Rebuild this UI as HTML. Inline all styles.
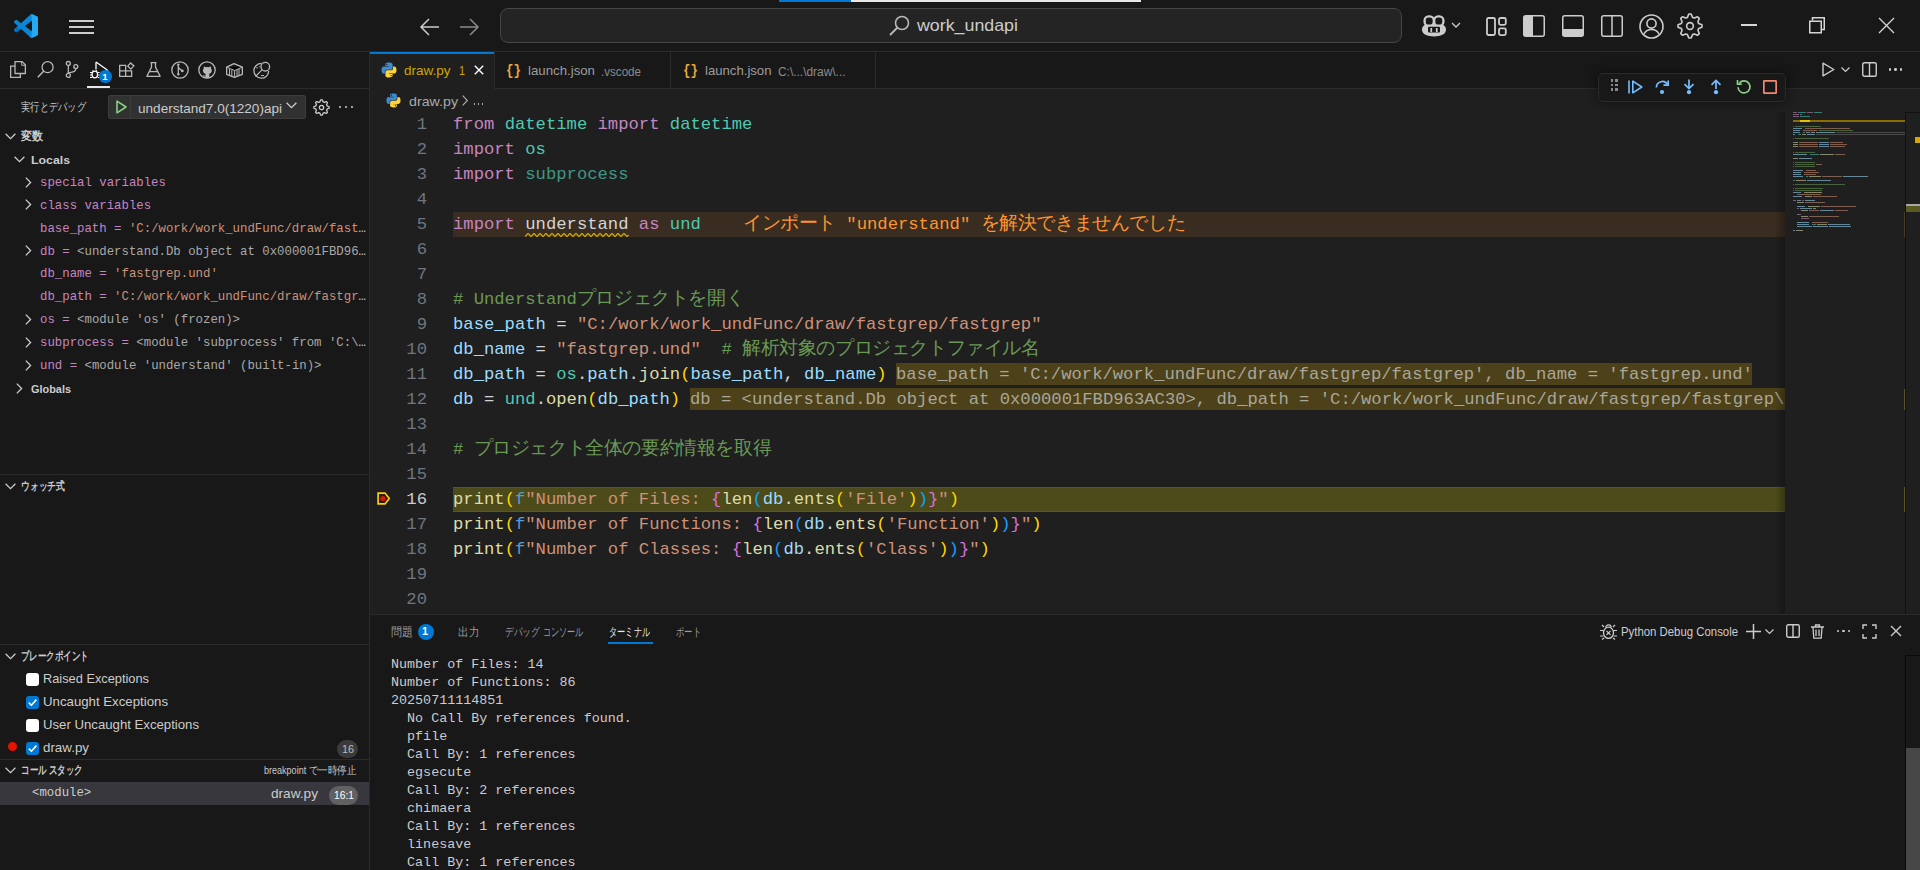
<!DOCTYPE html><html><head><meta charset="utf-8"><style>
*{box-sizing:border-box;margin:0;padding:0}
html,body{width:1920px;height:870px;overflow:hidden;background:#181818;font-family:"Liberation Sans",sans-serif;color:#cccccc}
.a{position:absolute}
.t{position:absolute;white-space:pre;font-family:"Liberation Sans",sans-serif}
svg.i{position:absolute;overflow:visible}
.ln{position:absolute;left:370px;width:57px;text-align:right;font-family:"Liberation Mono",monospace;font-size:17.22px;color:#6e7681;height:25px;line-height:25px}
.cl{position:absolute;left:453px;font-family:"Liberation Mono",monospace;font-size:17.22px;white-space:pre;height:25px;line-height:25px;color:#d4d4d4}
.j{font-size:18.6px;letter-spacing:-0.4px}
.k{color:#c586c0}.m{color:#4ec9b0}.v{color:#9cdcfe}.s{color:#ce9178}.f{color:#dcdcaa}.c{color:#6a9955}.b1{color:#ffd700}.b2{color:#da70d6}.b3{color:#179fff}.kw{color:#569cd6}.w{color:#d4d4d4}
.iv{position:absolute;height:22px;background:#4c4119;color:#a9a69a;font-family:"Liberation Mono",monospace;font-size:17.22px;white-space:pre;line-height:23px;overflow:hidden}
.sv{position:absolute;left:40px;font-family:"Liberation Mono",monospace;font-size:12.35px;white-space:pre;height:23px;line-height:23px;color:#cccccc;width:327px;overflow:hidden;text-overflow:ellipsis}
.vn{color:#c586c0}.vs{color:#ce9178}.vv{color:#a9a9a9}
.term{position:absolute;left:391px;font-family:"Liberation Mono",monospace;font-size:13.38px;white-space:pre;height:18px;line-height:18px;color:#cccccc}
</style></head><body>
<div class="a" style="left:0px;top:0px;width:1920px;height:51px;background:#181818;"></div>
<div class="a" style="left:0px;top:51px;width:1920px;height:1px;background:#2b2b2b;"></div>
<div class="a" style="left:779px;top:0px;width:72px;height:2px;background:#0078d4;"></div>
<div class="a" style="left:851px;top:0px;width:290px;height:2px;background:#e8e8e8;"></div>
<div class="a" style="left:0px;top:52px;width:369px;height:818px;background:#181818;"></div>
<div class="a" style="left:369px;top:52px;width:1px;height:818px;background:#2b2b2b;"></div>
<div class="a" style="left:0px;top:88px;width:369px;height:1px;background:#2b2b2b;"></div>
<div class="a" style="left:370px;top:52px;width:1550px;height:36px;background:#181818;"></div>
<div class="a" style="left:370px;top:88px;width:1550px;height:1px;background:#2b2b2b;"></div>
<div class="a" style="left:370px;top:89px;width:1550px;height:525px;background:#1f1f1f;"></div>
<div class="a" style="left:370px;top:614px;width:1550px;height:1px;background:#2b2b2b;"></div>
<div class="a" style="left:370px;top:615px;width:1550px;height:255px;background:#181818;"></div>
<div class="a" style="left:453px;top:212px;width:1332px;height:25px;background:#392c20;"></div>
<div class="a" style="left:453px;top:487px;width:1332px;height:25px;background:#4c4b19;"></div>
<div class="a" style="left:453px;top:487px;width:1332px;height:1px;background:#5a5722;"></div>
<div class="a" style="left:453px;top:511px;width:1332px;height:1px;background:#5a5722;"></div>
<div class="ln" style="top:112px;color:#6e7681">1</div>
<div class="cl" style="top:112px"><span class="k">from</span> <span class="m">datetime</span> <span class="k">import</span> <span class="m">datetime</span></div>
<div class="ln" style="top:137px;color:#6e7681">2</div>
<div class="cl" style="top:137px"><span class="k">import</span> <span class="m">os</span></div>
<div class="ln" style="top:162px;color:#6e7681">3</div>
<div class="cl" style="top:162px"><span class="k">import</span> <span class="m" style="opacity:.7">subprocess</span></div>
<div class="ln" style="top:187px;color:#6e7681">4</div>
<div class="ln" style="top:212px;color:#6e7681">5</div>
<div class="cl" style="top:212px"><span class="k">import</span> <span class="w">understand</span> <span class="k">as</span> <span class="m">und</span></div>
<div class="ln" style="top:237px;color:#6e7681">6</div>
<div class="ln" style="top:262px;color:#6e7681">7</div>
<div class="ln" style="top:287px;color:#6e7681">8</div>
<div class="cl" style="top:287px"><span class="c"># Understand</span><span class="c"><span class="j">プロジェクトを開く</span></span></div>
<div class="ln" style="top:312px;color:#6e7681">9</div>
<div class="cl" style="top:312px"><span class="v">base_path</span><span class="w"> = </span><span class="s">"C:/work/work_undFunc/draw/fastgrep/fastgrep"</span></div>
<div class="ln" style="top:337px;color:#6e7681">10</div>
<div class="cl" style="top:337px"><span class="v">db_name</span><span class="w"> = </span><span class="s">"fastgrep.und"</span>  <span class="c"># <span class="j">解析対象のプロジェクトファイル名</span></span></div>
<div class="ln" style="top:362px;color:#6e7681">11</div>
<div class="cl" style="top:362px"><span class="v">db_path</span><span class="w"> = </span><span class="m">os</span><span class="w">.</span><span class="v">path</span><span class="w">.</span><span class="f">join</span><span class="b1">(</span><span class="v">base_path</span><span class="w">, </span><span class="v">db_name</span><span class="b1">)</span></div>
<div class="ln" style="top:387px;color:#6e7681">12</div>
<div class="cl" style="top:387px"><span class="v">db</span><span class="w"> = </span><span class="m">und</span><span class="w">.</span><span class="f">open</span><span class="b1">(</span><span class="v">db_path</span><span class="b1">)</span></div>
<div class="ln" style="top:412px;color:#6e7681">13</div>
<div class="ln" style="top:437px;color:#6e7681">14</div>
<div class="cl" style="top:437px"><span class="c"># <span class="j">プロジェクト全体の要約情報を取得</span></span></div>
<div class="ln" style="top:462px;color:#6e7681">15</div>
<div class="ln" style="top:487px;color:#cccccc">16</div>
<div class="cl" style="top:487px"><span class="f">print</span><span class="b1">(</span><span class="kw">f</span><span class="s">"Number of Files: </span><span class="b2">{</span><span class="f">len</span><span class="b3">(</span><span class="v">db</span><span class="w">.</span><span class="f">ents</span><span class="b1">(</span><span class="s">'File'</span><span class="b1">)</span><span class="b3">)</span><span class="b2">}</span><span class="s">"</span><span class="b1">)</span></div>
<div class="ln" style="top:512px;color:#6e7681">17</div>
<div class="cl" style="top:512px"><span class="f">print</span><span class="b1">(</span><span class="kw">f</span><span class="s">"Number of Functions: </span><span class="b2">{</span><span class="f">len</span><span class="b3">(</span><span class="v">db</span><span class="w">.</span><span class="f">ents</span><span class="b1">(</span><span class="s">'Function'</span><span class="b1">)</span><span class="b3">)</span><span class="b2">}</span><span class="s">"</span><span class="b1">)</span></div>
<div class="ln" style="top:537px;color:#6e7681">18</div>
<div class="cl" style="top:537px"><span class="f">print</span><span class="b1">(</span><span class="kw">f</span><span class="s">"Number of Classes: </span><span class="b2">{</span><span class="f">len</span><span class="b3">(</span><span class="v">db</span><span class="w">.</span><span class="f">ents</span><span class="b1">(</span><span class="s">'Class'</span><span class="b1">)</span><span class="b3">)</span><span class="b2">}</span><span class="s">"</span><span class="b1">)</span></div>
<div class="ln" style="top:562px;color:#6e7681">19</div>
<div class="ln" style="top:587px;color:#6e7681">20</div>
<div class="cl" style="top:212px;left:743px;color:#ff942f"><span class="j">インポート</span> "understand" <span class="j">を解決できませんでした</span></div>
<svg class="i" style="left:525px;top:233px" width="104" height="4.5"><polyline points="0.0 3.30 0.5 3.13 1.0 2.65 1.5 2.00 2.0 1.35 2.5 0.87 3.0 0.70 3.5 0.87 4.0 1.35 4.5 2.00 5.0 2.65 5.5 3.13 6.0 3.30 6.5 3.13 7.0 2.65 7.5 2.00 8.0 1.35 8.5 0.87 9.0 0.70 9.5 0.87 10.0 1.35 10.5 2.00 11.0 2.65 11.5 3.13 12.0 3.30 12.5 3.13 13.0 2.65 13.5 2.00 14.0 1.35 14.5 0.87 15.0 0.70 15.5 0.87 16.0 1.35 16.5 2.00 17.0 2.65 17.5 3.13 18.0 3.30 18.5 3.13 19.0 2.65 19.5 2.00 20.0 1.35 20.5 0.87 21.0 0.70 21.5 0.87 22.0 1.35 22.5 2.00 23.0 2.65 23.5 3.13 24.0 3.30 24.5 3.13 25.0 2.65 25.5 2.00 26.0 1.35 26.5 0.87 27.0 0.70 27.5 0.87 28.0 1.35 28.5 2.00 29.0 2.65 29.5 3.13 30.0 3.30 30.5 3.13 31.0 2.65 31.5 2.00 32.0 1.35 32.5 0.87 33.0 0.70 33.5 0.87 34.0 1.35 34.5 2.00 35.0 2.65 35.5 3.13 36.0 3.30 36.5 3.13 37.0 2.65 37.5 2.00 38.0 1.35 38.5 0.87 39.0 0.70 39.5 0.87 40.0 1.35 40.5 2.00 41.0 2.65 41.5 3.13 42.0 3.30 42.5 3.13 43.0 2.65 43.5 2.00 44.0 1.35 44.5 0.87 45.0 0.70 45.5 0.87 46.0 1.35 46.5 2.00 47.0 2.65 47.5 3.13 48.0 3.30 48.5 3.13 49.0 2.65 49.5 2.00 50.0 1.35 50.5 0.87 51.0 0.70 51.5 0.87 52.0 1.35 52.5 2.00 53.0 2.65 53.5 3.13 54.0 3.30 54.5 3.13 55.0 2.65 55.5 2.00 56.0 1.35 56.5 0.87 57.0 0.70 57.5 0.87 58.0 1.35 58.5 2.00 59.0 2.65 59.5 3.13 60.0 3.30 60.5 3.13 61.0 2.65 61.5 2.00 62.0 1.35 62.5 0.87 63.0 0.70 63.5 0.87 64.0 1.35 64.5 2.00 65.0 2.65 65.5 3.13 66.0 3.30 66.5 3.13 67.0 2.65 67.5 2.00 68.0 1.35 68.5 0.87 69.0 0.70 69.5 0.87 70.0 1.35 70.5 2.00 71.0 2.65 71.5 3.13 72.0 3.30 72.5 3.13 73.0 2.65 73.5 2.00 74.0 1.35 74.5 0.87 75.0 0.70 75.5 0.87 76.0 1.35 76.5 2.00 77.0 2.65 77.5 3.13 78.0 3.30 78.5 3.13 79.0 2.65 79.5 2.00 80.0 1.35 80.5 0.87 81.0 0.70 81.5 0.87 82.0 1.35 82.5 2.00 83.0 2.65 83.5 3.13 84.0 3.30 84.5 3.13 85.0 2.65 85.5 2.00 86.0 1.35 86.5 0.87 87.0 0.70 87.5 0.87 88.0 1.35 88.5 2.00 89.0 2.65 89.5 3.13 90.0 3.30 90.5 3.13 91.0 2.65 91.5 2.00 92.0 1.35 92.5 0.87 93.0 0.70 93.5 0.87 94.0 1.35 94.5 2.00 95.0 2.65 95.5 3.13 96.0 3.30 96.5 3.13 97.0 2.65 97.5 2.00 98.0 1.35 98.5 0.87 99.0 0.70 99.5 0.87 100.0 1.35 100.5 2.00 101.0 2.65 101.5 3.13 102.0 3.30 102.5 3.13 103.0 2.65 103.5 2.00" stroke="#d4af00" stroke-width="1.25" fill="none"/></svg>
<div class="iv" style="left:896px;top:363px;width:856px">base_path = 'C:/work/work_undFunc/draw/fastgrep/fastgrep', db_name = 'fastgrep.und'</div>
<div class="iv" style="left:690px;top:388px;width:1095px">db = &lt;understand.Db object at 0x000001FBD963AC30&gt;, db_path = 'C:/work/work_undFunc/draw/fastgrep/fastgrep\\</div>
<svg class="i" style="left:377px;top:492px" width="14" height="13"><path d="M1.1 1.1 H8 L12.2 6.5 L8 11.9 H1.1 Z" fill="none" stroke="#ffcc00" stroke-width="1.7"/><circle cx="6" cy="6.5" r="2.6" fill="#e51400"/></svg>
<svg class="i" style="left:14px;top:14px" width="24" height="24" viewBox="0 0 100 100"><defs><clipPath id="lgR"><rect x="73" y="0" width="30" height="100"/></clipPath><clipPath id="lgB"><path d="M0 50 L29.3 62 L73 100 L0 100z"/></clipPath></defs><path fill-rule="evenodd" fill="#0a86d6" d="M96.46 10.8 75.86.87a6.23 6.23 0 0 0-7.1 1.2L29.33 38.04 12.15 25a4.16 4.16 0 0 0-5.32.24L1.32 30.25a4.17 4.17 0 0 0 0 6.16L16.21 50 1.32 63.59a4.17 4.17 0 0 0 0 6.16l5.51 5.01a4.16 4.16 0 0 0 5.32.24l17.18-13.04 39.43 35.97a6.23 6.23 0 0 0 7.1 1.2l20.6-9.92A6.25 6.25 0 0 0 100 83.62V16.38a6.25 6.25 0 0 0-3.54-5.58zM75.02 72.7 45.1 50l29.92-22.7z"/><path fill-rule="evenodd" fill="#006fbd" clip-path="url(#lgB)" d="M96.46 10.8 75.86.87a6.23 6.23 0 0 0-7.1 1.2L29.33 38.04 12.15 25a4.16 4.16 0 0 0-5.32.24L1.32 30.25a4.17 4.17 0 0 0 0 6.16L16.21 50 1.32 63.59a4.17 4.17 0 0 0 0 6.16l5.51 5.01a4.16 4.16 0 0 0 5.32.24l17.18-13.04 39.43 35.97a6.23 6.23 0 0 0 7.1 1.2l20.6-9.92A6.25 6.25 0 0 0 100 83.62V16.38a6.25 6.25 0 0 0-3.54-5.58zM75.02 72.7 45.1 50l29.92-22.7z"/><path fill-rule="evenodd" fill="#24a9f2" clip-path="url(#lgR)" d="M96.46 10.8 75.86.87a6.23 6.23 0 0 0-7.1 1.2L29.33 38.04 12.15 25a4.16 4.16 0 0 0-5.32.24L1.32 30.25a4.17 4.17 0 0 0 0 6.16L16.21 50 1.32 63.59a4.17 4.17 0 0 0 0 6.16l5.51 5.01a4.16 4.16 0 0 0 5.32.24l17.18-13.04 39.43 35.97a6.23 6.23 0 0 0 7.1 1.2l20.6-9.92A6.25 6.25 0 0 0 100 83.62V16.38a6.25 6.25 0 0 0-3.54-5.58zM75.02 72.7 45.1 50l29.92-22.7z"/></svg>
<div class="a" style="left:69px;top:20px;width:25px;height:2px;background:#cccccc;"></div>
<div class="a" style="left:69px;top:26px;width:25px;height:2px;background:#cccccc;"></div>
<div class="a" style="left:69px;top:32px;width:25px;height:2px;background:#cccccc;"></div>
<svg class="i" style="left:420px;top:18px" width="20" height="18" viewBox="0 0 20 18"><path d="M9 1 1 9l8 8M1 9h18" stroke="#cccccc" stroke-width="1.5" fill="none"/></svg>
<svg class="i" style="left:459px;top:18px" width="20" height="18" viewBox="0 0 20 18"><path d="M11 1l8 8-8 8M19 9H1" stroke="#8b8b8b" stroke-width="1.5" fill="none"/></svg>
<div class="a" style="left:500px;top:8px;width:902px;height:35px;background:#242424;border:1px solid #454545;border-radius:8px"></div>
<svg class="i" style="left:889px;top:15px" width="21" height="21" viewBox="0 0 21 21"><circle cx="13" cy="8" r="6.5" stroke="#b8b8b8" stroke-width="1.6" fill="none"/><path d="M8.5 12.5 1 20" stroke="#b8b8b8" stroke-width="1.8"/></svg>
<div class="t" id="t1" style="left:917px;top:13.50px;height:24px;line-height:24px;font-size:17px;color:#cccccc;font-family:'Liberation Sans';transform-origin:0 50%;transform:scaleX(1.0476);">work_undapi</div>
<svg class="i" style="left:1421px;top:15px" width="26" height="22" viewBox="0 0 26 22"><path d="M1 14.8C1 11.3 3.3 9.6 5.8 9.2h14.4c2.5.4 4.8 2.1 4.8 5.6 0 4.6-5.6 6.7-12 6.7S1 19.4 1 14.8z" fill="#cccccc"/><rect x="3.6" y="1.3" width="9.2" height="9.4" rx="4" stroke="#cccccc" stroke-width="2.3" fill="#181818"/><rect x="13.2" y="1.3" width="9.2" height="9.4" rx="4" stroke="#cccccc" stroke-width="2.3" fill="#181818"/><rect x="7" y="11.8" width="12" height="5.6" rx="1" fill="#181818"/><rect x="9.4" y="13" width="1.7" height="4" fill="#cccccc"/><rect x="14.9" y="13" width="1.7" height="4" fill="#cccccc"/></svg>
<svg class="i" style="left:1451px;top:22px" width="10" height="6" viewBox="0 0 10 6"><path d="M1 1l4 4 4-4" stroke="#cccccc" stroke-width="1.3" fill="none"/></svg>
<svg class="i" style="left:1486px;top:17px" width="21" height="19" viewBox="0 0 21 19"><rect x="1" y="1" width="8" height="17" rx="1.5" stroke="#cccccc" stroke-width="1.8" fill="none"/><rect x="13" y="1" width="6.8" height="6.8" rx="1.5" stroke="#cccccc" stroke-width="1.8" fill="none"/><rect x="13" y="11.3" width="6.8" height="6.8" rx="1.5" stroke="#cccccc" stroke-width="1.8" fill="none"/></svg>
<svg class="i" style="left:1523px;top:15px" width="22" height="22" viewBox="0 0 22 22"><rect x=".75" y=".75" width="20.5" height="20.5" rx="2" stroke="#cccccc" stroke-width="1.5" fill="none"/><rect x="1" y="1" width="9" height="20" fill="#cccccc"/></svg>
<svg class="i" style="left:1562px;top:15px" width="22" height="22" viewBox="0 0 22 22"><rect x=".75" y=".75" width="20.5" height="20.5" rx="2" stroke="#cccccc" stroke-width="1.5" fill="none"/><rect x="1" y="14" width="20" height="7" fill="#cccccc"/></svg>
<svg class="i" style="left:1601px;top:15px" width="22" height="22" viewBox="0 0 22 22"><rect x=".75" y=".75" width="20.5" height="20.5" rx="2" stroke="#cccccc" stroke-width="1.5" fill="none"/><path d="M11 1v20" stroke="#cccccc" stroke-width="1.5"/></svg>
<svg class="i" style="left:1639px;top:14px" width="25" height="25" viewBox="0 0 25 25"><circle cx="12.5" cy="12.5" r="11.5" stroke="#cccccc" stroke-width="1.6" fill="none"/><circle cx="12.5" cy="9.5" r="4.6" stroke="#cccccc" stroke-width="1.6" fill="none"/><path d="M5 20c1.5-3 4-4.5 7.5-4.5S18.5 17 20 20" stroke="#cccccc" stroke-width="1.6" fill="none"/></svg>
<svg class="i" style="left:1677px;top:13px" width="26" height="26" viewBox="0 0 26 26"><path d="M24.94 11.82 L24.94 14.18 L21.61 15.61 L20.94 17.24 L22.28 20.61 L20.61 22.28 L17.24 20.94 L15.61 21.61 L14.18 24.94 L11.82 24.94 L10.39 21.61 L8.76 20.94 L5.39 22.28 L3.72 20.61 L5.06 17.24 L4.39 15.61 L1.06 14.18 L1.06 11.82 L4.39 10.39 L5.06 8.76 L3.72 5.39 L5.39 3.72 L8.76 5.06 L10.39 4.39 L11.82 1.06 L14.18 1.06 L15.61 4.39 L17.24 5.06 L20.61 3.72 L22.28 5.39 L20.94 8.76 L21.61 10.39Z" stroke="#cccccc" stroke-width="1.6" fill="none" stroke-linejoin="round"/><circle cx="13" cy="13" r="3.36" stroke="#cccccc" stroke-width="1.6" fill="none"/></svg>
<div class="a" style="left:1741px;top:24px;width:16px;height:2px;background:#d6d6d6;"></div>
<svg class="i" style="left:1808px;top:17px" width="18" height="17" viewBox="0 0 18 17"><path d="M4.5 3.5V.75h11.75V12.5H13.5" stroke="#d6d6d6" stroke-width="1.5" fill="none"/><rect x="1.75" y="4.25" width="11.5" height="11.5" stroke="#d6d6d6" stroke-width="1.5" fill="none"/></svg>
<svg class="i" style="left:1878px;top:17px" width="17" height="17" viewBox="0 0 17 17"><path d="M1 1l15 15M16 1 1 16" stroke="#d6d6d6" stroke-width="1.3"/></svg>
<svg class="i" style="left:10px;top:61px" width="16" height="17" viewBox="0 0 16 17"><path d="M5 .65h7.2l3.15 3.15V12.5H5z" stroke="#b8b8b8" stroke-width="1.3" fill="none" stroke-linejoin="round"/><path d="M11.7.65v3.6h3.6" stroke="#b8b8b8" stroke-width="1" fill="none"/><path d="M5 5.2H.65v11.15h9.7V12.5" stroke="#b8b8b8" stroke-width="1.3" fill="none"/></svg>
<svg class="i" style="left:37px;top:61px" width="17" height="17" viewBox="0 0 17 17"><circle cx="10.6" cy="6.2" r="5.5" stroke="#b8b8b8" stroke-width="1.3" fill="none"/><path d="M6.6 10.2 .8 16.2" stroke="#b8b8b8" stroke-width="1.5"/></svg>
<svg class="i" style="left:65px;top:61px" width="14" height="17" viewBox="0 0 14 17"><circle cx="3.3" cy="2.5" r="2" stroke="#b8b8b8" stroke-width="1.3" fill="none"/><circle cx="10.8" cy="5.6" r="2" stroke="#b8b8b8" stroke-width="1.3" fill="none"/><circle cx="3.3" cy="14.4" r="2" stroke="#b8b8b8" stroke-width="1.3" fill="none"/><path d="M3.3 4.5v7.9M10.8 7.6c0 3-2 3.6-5 3.8-1.2.1-2.5.6-2.5 1.6" stroke="#b8b8b8" stroke-width="1.3" fill="none"/></svg>
<svg class="i" style="left:90px;top:61px" width="19" height="18" viewBox="0 0 19 18"><path d="M6 1v7.5M6 1l11.6 8.3-5 3.5" stroke="#ffffff" stroke-width="1.3" fill="none" stroke-linejoin="round"/><ellipse cx="4.8" cy="13.5" rx="2.7" ry="3.4" stroke="#ffffff" stroke-width="1.3" fill="none"/><path d="M0 11.5h2M0 14h2M0 16.5h2M7.6 11.5h2M7.6 14h2M7.6 16.5h2M2.5 9.5l1 1M7 9.5l-1 1" stroke="#ffffff" stroke-width="1.1"/></svg>
<div class="a" style="left:99.4px;top:70.4px;width:12.5px;height:12.5px;border-radius:50%;background:#0078d4"></div>
<div class="t" id="t2" style="left:102.3px;top:65.00px;height:24px;line-height:24px;font-size:9.5px;color:#ffffff;font-family:'Liberation Sans';font-weight:bold;">1</div>
<div class="a" style="left:87px;top:86px;width:23px;height:2px;background:#e7e7e7;"></div>
<svg class="i" style="left:119px;top:62px" width="16" height="15" viewBox="0 0 16 15"><path d="M.65 3.4h6v11h-6zM.65 8.9h12v5.5H6.65M6.65 3.4v11" stroke="#b8b8b8" stroke-width="1.3" fill="none"/><path d="M8.8 4.1 11.6.9l3.3 3-3 3.2z" stroke="#b8b8b8" stroke-width="1.3" fill="none"/></svg>
<svg class="i" style="left:146px;top:62px" width="15" height="15" viewBox="0 0 15 15"><path d="M4.5.65h6M5.5.65v4.5L.9 14.3h13.2L9.5 5.15V.65" stroke="#b8b8b8" stroke-width="1.3" fill="none" stroke-linejoin="round"/><path d="M3.2 9.6h8.6" stroke="#b8b8b8" stroke-width="1.3"/></svg>
<svg class="i" style="left:171px;top:61px" width="18" height="18" viewBox="0 0 18 18"><circle cx="9" cy="9" r="8.2" stroke="#b8b8b8" stroke-width="1.3" fill="none"/><path d="M7.3 3.5v9.5M7.3 6.5l3.6 3.3" stroke="#b8b8b8" stroke-width="1.3"/><circle cx="7.3" cy="3.6" r="1.2" fill="#b8b8b8"/><circle cx="7.3" cy="13.2" r="1.2" fill="#b8b8b8"/><circle cx="11.3" cy="9.9" r="1.4" fill="#b8b8b8"/></svg>
<svg class="i" style="left:198px;top:61px" width="18" height="18" viewBox="0 0 18 18"><circle cx="9" cy="9" r="8.2" stroke="#b8b8b8" stroke-width="1.3" fill="none"/><path d="M6.6 17V14.3c-1 .3-2.2-.1-2.6-1.2M11.4 17v-2.6c0-.8-.3-1.2-.6-1.5 2-.3 3-1.3 3-3.4 0-.8-.3-1.5-.8-2 .1-.6.1-1.3-.1-2-.8 0-1.5.4-2 .8a6 6 0 0 0-3 0c-.6-.4-1.3-.8-2-.8-.3.7-.3 1.4-.2 2-.5.5-.8 1.2-.8 2 0 2.1 1 3.1 3 3.4-.3.3-.6.8-.6 1.5V17z" fill="#b8b8b8"/></svg>
<svg class="i" style="left:226px;top:63px" width="17" height="15" viewBox="0 0 17 15"><path d="M.65 4.2 8 .65l8.35 3.55v7.1L8.5 14.35.65 11.3z" stroke="#b8b8b8" stroke-width="1.3" fill="none" stroke-linejoin="round"/><path d="M.65 4.2l8 3.3 7.7-3.3M8.6 7.5v6.8M3.5 6v6.6M5.8 7v6.8M11 6.7v6.6M13 6v6.6" stroke="#b8b8b8" stroke-width="1"/></svg>
<svg class="i" style="left:252px;top:61px" width="19" height="19" viewBox="0 0 19 19"><path d="M9.5 2.4A7.4 7.4 0 1 0 16.7 10" stroke="#b8b8b8" stroke-width="1.3" fill="none"/><circle cx="13.3" cy="5.7" r="4.3" stroke="#b8b8b8" stroke-width="1.3" fill="none"/><path d="M10.3 8.7 3.5 15.5M9 14.5h3M4.5 6.3l1 1M7 5.5l.5.5" stroke="#b8b8b8" stroke-width="1.1"/></svg>
<div class="t" id="t3" style="left:21px;top:95.00px;height:24px;line-height:24px;font-size:12px;color:#cccccc;font-family:'Liberation Sans';transform-origin:0 50%;transform:scaleX(0.7738);">実行とデバッグ</div>
<div class="a" style="left:108px;top:95px;width:198px;height:24px;background:#313131;border:1px solid #3c3c3c;border-radius:2px"></div>
<div class="a" style="left:130px;top:96px;width:1px;height:22px;background:#3c3c3c;"></div>
<svg class="i" style="left:116px;top:100px" width="11" height="14" viewBox="0 0 11 14"><path d="M1 1.2v11.6L10 7z" stroke="#89d185" stroke-width="1.6" fill="none" stroke-linejoin="round"/></svg>
<div class="t" id="t4" style="left:138px;top:96.50px;height:24px;line-height:24px;font-size:13.5px;color:#cccccc;font-family:'Liberation Sans';transform-origin:0 50%;transform:scaleX(1.0045);">understand7.0(1220)api</div>
<svg class="i" style="left:286px;top:102px" width="11" height="7" viewBox="0 0 11 7"><path d="M.6.8 5.5 5.6 10.4.8" stroke="#cccccc" stroke-width="1.3" fill="none"/></svg>
<svg class="i" style="left:313px;top:99px" width="17" height="17" viewBox="0 0 17 17"><path d="M16.16 7.75 L16.16 9.25 L14.05 10.18 L13.62 11.23 L14.45 13.38 L13.38 14.45 L11.23 13.62 L10.18 14.05 L9.25 16.16 L7.75 16.16 L6.82 14.05 L5.77 13.62 L3.62 14.45 L2.55 13.38 L3.38 11.23 L2.95 10.18 L0.84 9.25 L0.84 7.75 L2.95 6.82 L3.38 5.77 L2.55 3.62 L3.62 2.55 L5.77 3.38 L6.82 2.95 L7.75 0.84 L9.25 0.84 L10.18 2.95 L11.23 3.38 L13.38 2.55 L14.45 3.62 L13.62 5.77 L14.05 6.82Z" stroke="#cccccc" stroke-width="1.3" fill="none" stroke-linejoin="round"/><circle cx="8.5" cy="8.5" r="2.16" stroke="#cccccc" stroke-width="1.3" fill="none"/></svg>
<div class="a" style="left:338.9px;top:105.9px;width:2.2px;height:2.2px;border-radius:50%;background:#cccccc"></div>
<div class="a" style="left:344.9px;top:105.9px;width:2.2px;height:2.2px;border-radius:50%;background:#cccccc"></div>
<div class="a" style="left:350.9px;top:105.9px;width:2.2px;height:2.2px;border-radius:50%;background:#cccccc"></div>
<svg class="i" style="left:5px;top:133px" width="11" height="7" viewBox="0 0 11 7"><path d="M.6.8 5.5 5.6 10.4.8" stroke="#cccccc" stroke-width="1.3" fill="none"/></svg>
<div class="t" id="t5" style="left:21px;top:124.00px;height:24px;line-height:24px;font-size:11.5px;color:#cccccc;font-family:'Liberation Sans';font-weight:bold;transform-origin:0 50%;transform:scaleX(0.9167);">変数</div>
<svg class="i" style="left:14px;top:156px" width="11" height="7" viewBox="0 0 11 7"><path d="M.6.8 5.5 5.6 10.4.8" stroke="#cccccc" stroke-width="1.3" fill="none"/></svg>
<div class="t" id="t6" style="left:31px;top:147.50px;height:24px;line-height:24px;font-size:11.5px;color:#cccccc;font-family:'Liberation Sans';font-weight:bold;transform-origin:0 50%;transform:scaleX(1.0703);">Locals</div>
<svg class="i" style="left:25px;top:176.5px" width="7" height="11" viewBox="0 0 7 11"><path d="M.8.6 5.6 5.5.8 10.4" stroke="#cccccc" stroke-width="1.3" fill="none"/></svg>
<div class="sv" style="top:171.8px"><span class="vn">special variables</span></div>
<svg class="i" style="left:25px;top:199.4px" width="7" height="11" viewBox="0 0 7 11"><path d="M.8.6 5.6 5.5.8 10.4" stroke="#cccccc" stroke-width="1.3" fill="none"/></svg>
<div class="sv" style="top:194.7px"><span class="vn">class variables</span></div>
<div class="sv" style="top:217.6px"><span class="vn">base_path</span><span class="vn"> = </span><span class="vs">'C:/work/work_undFunc/draw/fastgrep/fastgrep'</span></div>
<svg class="i" style="left:25px;top:245.2px" width="7" height="11" viewBox="0 0 7 11"><path d="M.8.6 5.6 5.5.8 10.4" stroke="#cccccc" stroke-width="1.3" fill="none"/></svg>
<div class="sv" style="top:240.5px"><span class="vn">db</span><span class="vn"> = </span><span class="vv">&lt;understand.Db object at 0x000001FBD963AC30&gt;</span></div>
<div class="sv" style="top:263.4px"><span class="vn">db_name</span><span class="vn"> = </span><span class="vs">'fastgrep.und'</span></div>
<div class="sv" style="top:286.3px"><span class="vn">db_path</span><span class="vn"> = </span><span class="vs">'C:/work/work_undFunc/draw/fastgrep/fastgrep/fastgrep.und'</span></div>
<svg class="i" style="left:25px;top:313.9px" width="7" height="11" viewBox="0 0 7 11"><path d="M.8.6 5.6 5.5.8 10.4" stroke="#cccccc" stroke-width="1.3" fill="none"/></svg>
<div class="sv" style="top:309.2px"><span class="vn">os</span><span class="vn"> = </span><span class="vv">&lt;module 'os' (frozen)&gt;</span></div>
<svg class="i" style="left:25px;top:336.79999999999995px" width="7" height="11" viewBox="0 0 7 11"><path d="M.8.6 5.6 5.5.8 10.4" stroke="#cccccc" stroke-width="1.3" fill="none"/></svg>
<div class="sv" style="top:332.1px"><span class="vn">subprocess</span><span class="vn"> = </span><span class="vv">&lt;module 'subprocess' from 'C:\\Python\\lib\\subprocess.py'&gt;</span></div>
<svg class="i" style="left:25px;top:359.7px" width="7" height="11" viewBox="0 0 7 11"><path d="M.8.6 5.6 5.5.8 10.4" stroke="#cccccc" stroke-width="1.3" fill="none"/></svg>
<div class="sv" style="top:355.0px"><span class="vn">und</span><span class="vn"> = </span><span class="vv">&lt;module 'understand' (built-in)&gt;</span></div>
<svg class="i" style="left:15.5px;top:382.5px" width="7" height="11" viewBox="0 0 7 11"><path d="M.8.6 5.6 5.5.8 10.4" stroke="#cccccc" stroke-width="1.3" fill="none"/></svg>
<div class="t" id="t7" style="left:31px;top:376.80px;height:24px;line-height:24px;font-size:11.5px;color:#cccccc;font-family:'Liberation Sans';font-weight:bold;transform-origin:0 50%;transform:scaleX(0.9481);">Globals</div>
<div class="a" style="left:0px;top:474px;width:369px;height:1px;background:#2b2b2b;"></div>
<svg class="i" style="left:5px;top:483px" width="11" height="7" viewBox="0 0 11 7"><path d="M.6.8 5.5 5.6 10.4.8" stroke="#cccccc" stroke-width="1.3" fill="none"/></svg>
<div class="t" id="t8" style="left:21px;top:474.20px;height:24px;line-height:24px;font-size:11.5px;color:#cccccc;font-family:'Liberation Sans';font-weight:bold;transform-origin:0 50%;transform:scaleX(0.7333);">ウォッチ式</div>
<div class="a" style="left:0px;top:644px;width:369px;height:1px;background:#2b2b2b;"></div>
<svg class="i" style="left:5px;top:653px" width="11" height="7" viewBox="0 0 11 7"><path d="M.6.8 5.5 5.6 10.4.8" stroke="#cccccc" stroke-width="1.3" fill="none"/></svg>
<div class="t" id="t9" style="left:21px;top:644.00px;height:24px;line-height:24px;font-size:11.5px;color:#cccccc;font-family:'Liberation Sans';font-weight:bold;transform-origin:0 50%;transform:scaleX(0.7083);">ブレークポイント</div>
<div class="a" style="left:26px;top:672.5px;width:13px;height:13px;border-radius:3px;background:#ffffff"></div>
<div class="t" id="t10" style="left:43px;top:667.00px;height:24px;line-height:24px;font-size:13px;color:#cccccc;font-family:'Liberation Sans';transform-origin:0 50%;transform:scaleX(0.9845);">Raised Exceptions</div>
<div class="a" style="left:26px;top:695.5px;width:13px;height:13px;border-radius:3px;background:#0078d4"></div>
<svg class="i" style="left:26px;top:695.5px" width="13" height="13" viewBox="0 0 13 13"><path d="M2.8 6.6 5.4 9.2 10.4 3.6" stroke="#ffffff" stroke-width="1.6" fill="none"/></svg>
<div class="t" id="t11" style="left:43px;top:690.00px;height:24px;line-height:24px;font-size:13px;color:#cccccc;font-family:'Liberation Sans';transform-origin:0 50%;transform:scaleX(1.0174);">Uncaught Exceptions</div>
<div class="a" style="left:26px;top:718.5px;width:13px;height:13px;border-radius:3px;background:#ffffff"></div>
<div class="t" id="t12" style="left:43px;top:713.00px;height:24px;line-height:24px;font-size:13px;color:#cccccc;font-family:'Liberation Sans';transform-origin:0 50%;transform:scaleX(1.0135);">User Uncaught Exceptions</div>
<div class="a" style="left:26px;top:741.5px;width:13px;height:13px;border-radius:3px;background:#0078d4"></div>
<svg class="i" style="left:26px;top:741.5px" width="13" height="13" viewBox="0 0 13 13"><path d="M2.8 6.6 5.4 9.2 10.4 3.6" stroke="#ffffff" stroke-width="1.6" fill="none"/></svg>
<div class="t" id="t13" style="left:43px;top:736.00px;height:24px;line-height:24px;font-size:13px;color:#cccccc;font-family:'Liberation Sans';transform-origin:0 50%;transform:scaleX(1.0265);">draw.py</div>
<div class="a" style="left:8px;top:742px;width:9px;height:9px;border-radius:50%;background:#e51400"></div>
<div class="a" style="left:337px;top:740px;width:21px;height:18px;border-radius:9px;background:#3b3b3b"></div>
<div class="t" id="t14" style="left:341.5px;top:737.00px;height:24px;line-height:24px;font-size:11px;color:#bbbbbb;font-family:'Liberation Sans';transform-origin:0 50%;transform:scaleX(0.9796);">16</div>
<div class="a" style="left:0px;top:759px;width:369px;height:1px;background:#2b2b2b;"></div>
<svg class="i" style="left:5px;top:767px" width="11" height="7" viewBox="0 0 11 7"><path d="M.6.8 5.5 5.6 10.4.8" stroke="#cccccc" stroke-width="1.3" fill="none"/></svg>
<div class="t" id="t15" style="left:21px;top:758.00px;height:24px;line-height:24px;font-size:11.5px;color:#cccccc;font-family:'Liberation Sans';font-weight:bold;transform-origin:0 50%;transform:scaleX(0.7110);">コール スタック</div>
<div class="t" id="t16" style="left:264px;top:758.00px;height:24px;line-height:24px;font-size:10.5px;color:#cccccc;font-family:'Liberation Sans';transform-origin:0 50%;transform:scaleX(0.8602);">breakpoint で一時停止</div>
<div class="a" style="left:0px;top:782px;width:369px;height:23px;background:#37373d;"></div>
<div class="sv" style="left:32px;top:782px;color:#cccccc">&lt;module&gt;</div>
<div class="t" id="t17" style="left:271px;top:782.30px;height:24px;line-height:24px;font-size:13px;color:#cccccc;font-family:'Liberation Sans';transform-origin:0 50%;transform:scaleX(1.0488);">draw.py</div>
<div class="a" style="left:329px;top:786px;width:29px;height:19px;border-radius:9.5px;background:#616161"></div>
<div class="t" id="t18" style="left:333.5px;top:783.00px;height:24px;line-height:24px;font-size:11px;color:#ffffff;font-family:'Liberation Sans';transform-origin:0 50%;transform:scaleX(0.9336);">16:1</div>
<div class="a" style="left:370px;top:52px;width:124px;height:37px;background:#1f1f1f;"></div>
<div class="a" style="left:370px;top:52px;width:124px;height:2px;background:#0078d4;"></div>
<div class="a" style="left:494px;top:52px;width:1px;height:36px;background:#2b2b2b;"></div>
<div class="a" style="left:670px;top:52px;width:1px;height:36px;background:#2b2b2b;"></div>
<div class="a" style="left:875px;top:52px;width:1px;height:36px;background:#2b2b2b;"></div>
<svg class="i" style="left:381px;top:62px" width="16" height="16" viewBox="0 0 16 16"><path fill="#3c8ad0" d="M7.9.6C4.2.6 4.4 2.2 4.4 2.2v1.7h3.6v.5H2.9S.5 4.1.5 7.9s2.1 3.7 2.1 3.7h1.3V9.8s-.1-2.1 2.1-2.1h3.6s2 0 2-2V2.6S11.9.6 7.9.6zM5.9 1.8a.65.65 0 1 1 0 1.3.65.65 0 0 1 0-1.3z"/><path fill="#ffd43b" d="M8.1 15.4c3.7 0 3.5-1.6 3.5-1.6v-1.7H8v-.5h5.1s2.4.3 2.4-3.5-2.1-3.7-2.1-3.7h-1.3v1.8s.1 2.1-2.1 2.1H6.4s-2 0-2 2v3.1s-.3 2 3.7 2zm2-1.2a.65.65 0 1 1 0-1.3.65.65 0 0 1 0 1.3z"/></svg>
<div class="t" id="t19" style="left:403.5px;top:58.50px;height:24px;line-height:24px;font-size:13.5px;color:#cca700;font-family:'Liberation Sans';transform-origin:0 50%;transform:scaleX(0.9993);">draw.py</div>
<div class="t" id="t20" style="left:459px;top:58.50px;height:24px;line-height:24px;font-size:12px;color:#cca700;font-family:'Liberation Sans';transform-origin:0 50%;transform:scaleX(0.8972);">1</div>
<svg class="i" style="left:474px;top:65px" width="10" height="10" viewBox="0 0 10 10"><path d="M.8.8l8.4 8.4M9.2.8.8 9.2" stroke="#ffffff" stroke-width="1.4"/></svg>
<div class="t" id="t21" style="left:506px;top:58.50px;height:24px;line-height:24px;font-size:14px;color:#e8ab3a;font-family:'Liberation Mono';font-weight:bold;transform-origin:0 50%;transform:scaleX(0.8922);">{}</div>
<div class="t" id="t22" style="left:528px;top:58.50px;height:24px;line-height:24px;font-size:13.5px;color:#9d9d9d;font-family:'Liberation Sans';transform-origin:0 50%;transform:scaleX(0.9808);">launch.json</div>
<div class="t" id="t23" style="left:601px;top:59.50px;height:24px;line-height:24px;font-size:12px;color:#8b8b8b;font-family:'Liberation Sans';transform-origin:0 50%;transform:scaleX(0.9671);">.vscode</div>
<div class="t" id="t24" style="left:683px;top:58.50px;height:24px;line-height:24px;font-size:14px;color:#e8ab3a;font-family:'Liberation Mono';font-weight:bold;transform-origin:0 50%;transform:scaleX(0.8922);">{}</div>
<div class="t" id="t25" style="left:704.5px;top:58.50px;height:24px;line-height:24px;font-size:13.5px;color:#9d9d9d;font-family:'Liberation Sans';transform-origin:0 50%;transform:scaleX(0.9735);">launch.json</div>
<div class="t" id="t26" style="left:777.5px;top:59.50px;height:24px;line-height:24px;font-size:12px;color:#8b8b8b;font-family:'Liberation Sans';transform-origin:0 50%;transform:scaleX(0.9924);">C:\...\draw\...</div>
<svg class="i" style="left:1822px;top:62px" width="13" height="15" viewBox="0 0 13 15"><path d="M1 1.2v12.6L11.8 7.5z" stroke="#cccccc" stroke-width="1.4" fill="none" stroke-linejoin="round"/></svg>
<svg class="i" style="left:1841px;top:67px" width="9" height="5" viewBox="0 0 9 5"><path d="M.5.5 4.5 4.5 8.5.5" stroke="#cccccc" stroke-width="1.2" fill="none"/></svg>
<svg class="i" style="left:1862px;top:62px" width="15" height="15" viewBox="0 0 15 15"><rect x=".75" y=".75" width="13.5" height="13.5" rx="1.5" stroke="#cccccc" stroke-width="1.4" fill="none"/><path d="M7.5 1v13" stroke="#cccccc" stroke-width="1.4"/></svg>
<div class="a" style="left:1888.9px;top:68.4px;width:2.3px;height:2.3px;border-radius:50%;background:#cccccc"></div>
<div class="a" style="left:1894.4px;top:68.4px;width:2.3px;height:2.3px;border-radius:50%;background:#cccccc"></div>
<div class="a" style="left:1899.9px;top:68.4px;width:2.3px;height:2.3px;border-radius:50%;background:#cccccc"></div>
<svg class="i" style="left:386px;top:93px" width="15" height="15" viewBox="0 0 16 16"><path fill="#3c8ad0" d="M7.9.6C4.2.6 4.4 2.2 4.4 2.2v1.7h3.6v.5H2.9S.5 4.1.5 7.9s2.1 3.7 2.1 3.7h1.3V9.8s-.1-2.1 2.1-2.1h3.6s2 0 2-2V2.6S11.9.6 7.9.6zM5.9 1.8a.65.65 0 1 1 0 1.3.65.65 0 0 1 0-1.3z"/><path fill="#ffd43b" d="M8.1 15.4c3.7 0 3.5-1.6 3.5-1.6v-1.7H8v-.5h5.1s2.4.3 2.4-3.5-2.1-3.7-2.1-3.7h-1.3v1.8s.1 2.1-2.1 2.1H6.4s-2 0-2 2v3.1s-.3 2 3.7 2zm2-1.2a.65.65 0 1 1 0-1.3.65.65 0 0 1 0 1.3z"/></svg>
<div class="t" id="t27" style="left:409px;top:89.50px;height:24px;line-height:24px;font-size:13.5px;color:#a9a9a9;font-family:'Liberation Sans';transform-origin:0 50%;transform:scaleX(1.0531);">draw.py</div>
<svg class="i" style="left:462px;top:95px" width="6" height="11" viewBox="0 0 6 11"><path d="M.7.6 5.3 5.5.7 10.4" stroke="#a9a9a9" stroke-width="1.2" fill="none"/></svg>
<div class="a" style="left:473.6px;top:103.3px;width:1.8px;height:1.8px;background:#a9a9a9"></div>
<div class="a" style="left:477.6px;top:103.3px;width:1.8px;height:1.8px;background:#a9a9a9"></div>
<div class="a" style="left:481.6px;top:103.3px;width:1.8px;height:1.8px;background:#a9a9a9"></div>
<div class="a" style="left:1598px;top:73px;width:188px;height:29px;background:#181818;border:1px solid #2b2b2b;border-radius:5px;box-shadow:0 0 8px 2px rgba(0,0,0,.36)"></div>
<div class="a" style="left:1610.9px;top:79.4px;width:2.2px;height:2.2px;background:#8a8a8a"></div>
<div class="a" style="left:1615.4px;top:79.4px;width:2.2px;height:2.2px;background:#8a8a8a"></div>
<div class="a" style="left:1610.9px;top:83.9px;width:2.2px;height:2.2px;background:#8a8a8a"></div>
<div class="a" style="left:1615.4px;top:83.9px;width:2.2px;height:2.2px;background:#8a8a8a"></div>
<div class="a" style="left:1610.9px;top:88.4px;width:2.2px;height:2.2px;background:#8a8a8a"></div>
<div class="a" style="left:1615.4px;top:88.4px;width:2.2px;height:2.2px;background:#8a8a8a"></div>
<svg class="i" style="left:1628px;top:80px" width="15" height="14" viewBox="0 0 15 14"><path d="M1 .5v13" stroke="#75beff" stroke-width="1.6"/><path d="M4.8 1.2v11.6l9-5.8z" stroke="#75beff" stroke-width="1.6" fill="none" stroke-linejoin="round"/></svg>
<svg class="i" style="left:1655px;top:79px" width="15" height="16" viewBox="0 0 15 16"><path d="M1.4 8.5A6 6 0 0 1 12.6 5.5" stroke="#75beff" stroke-width="1.7" fill="none"/><path d="M13.2 1.5v4.7H8.5" stroke="#75beff" stroke-width="1.7" fill="none"/><circle cx="7" cy="13" r="2.1" fill="#75beff"/></svg>
<svg class="i" style="left:1682px;top:79px" width="14" height="16" viewBox="0 0 14 16"><path d="M7 .5v8.5M2.5 5.2 7 9.5l4.5-4.3" stroke="#75beff" stroke-width="1.7" fill="none"/><circle cx="7" cy="13.2" r="2.1" fill="#75beff"/></svg>
<svg class="i" style="left:1709px;top:79px" width="14" height="16" viewBox="0 0 14 16"><path d="M7 10V1.5M2.5 5.8 7 1.5l4.5 4.3" stroke="#75beff" stroke-width="1.7" fill="none"/><circle cx="7" cy="13.2" r="2.1" fill="#75beff"/></svg>
<svg class="i" style="left:1736px;top:79px" width="15" height="15" viewBox="0 0 15 15"><path d="M3.4 4A6 6 0 1 1 2 8.2" stroke="#89d185" stroke-width="1.7" fill="none"/><path d="M1.5 1v4.2h4.2" stroke="#89d185" stroke-width="1.7" fill="none"/></svg>
<svg class="i" style="left:1763px;top:80px" width="14" height="14" viewBox="0 0 14 14"><rect x=".85" y=".85" width="12.3" height="12.3" rx=".5" stroke="#f48771" stroke-width="1.7" fill="none"/></svg>
<div class="a" style="left:1793px;top:112px;width:4px;height:1.3px;background:#c586c0;opacity:0.55"></div>
<div class="a" style="left:1798px;top:112px;width:8px;height:1.3px;background:#4ec9b0;opacity:0.55"></div>
<div class="a" style="left:1807px;top:112px;width:6px;height:1.3px;background:#c586c0;opacity:0.55"></div>
<div class="a" style="left:1814px;top:112px;width:8px;height:1.3px;background:#4ec9b0;opacity:0.55"></div>
<div class="a" style="left:1793px;top:114px;width:6px;height:1.3px;background:#c586c0;opacity:0.55"></div>
<div class="a" style="left:1800px;top:114px;width:2px;height:1.3px;background:#4ec9b0;opacity:0.55"></div>
<div class="a" style="left:1793px;top:116px;width:6px;height:1.3px;background:#c586c0;opacity:0.55"></div>
<div class="a" style="left:1800px;top:116px;width:10px;height:1.3px;background:#4ec9b0;opacity:0.55"></div>
<div class="a" style="left:1793px;top:120px;width:112px;height:2px;background:#8a6d05"></div>
<div class="a" style="left:1800px;top:120px;width:10px;height:2px;background:#e8c000"></div>
<div class="a" style="left:1793px;top:126px;width:1px;height:1.3px;background:#6a9955;opacity:0.55"></div>
<div class="a" style="left:1795px;top:126px;width:26px;height:1.3px;background:#6a9955;opacity:0.55"></div>
<div class="a" style="left:1793px;top:128px;width:9px;height:1.3px;background:#9cdcfe;opacity:0.55"></div>
<div class="a" style="left:1805px;top:128px;width:45px;height:1.3px;background:#ce9178;opacity:0.55"></div>
<div class="a" style="left:1793px;top:130px;width:7px;height:1.3px;background:#9cdcfe;opacity:0.55"></div>
<div class="a" style="left:1803px;top:130px;width:14px;height:1.3px;background:#ce9178;opacity:0.55"></div>
<div class="a" style="left:1819px;top:130px;width:2px;height:1.3px;background:#6a9955;opacity:0.55"></div>
<div class="a" style="left:1821px;top:130px;width:32px;height:1.3px;background:#6a9955;opacity:0.55"></div>
<div class="a" style="left:1793px;top:132px;width:7px;height:1.3px;background:#9cdcfe;opacity:0.55"></div>
<div class="a" style="left:1803px;top:132px;width:2px;height:1.3px;background:#4ec9b0;opacity:0.55"></div>
<div class="a" style="left:1806px;top:132px;width:4px;height:1.3px;background:#9cdcfe;opacity:0.55"></div>
<div class="a" style="left:1811px;top:132px;width:4px;height:1.3px;background:#dcdcaa;opacity:0.55"></div>
<div class="a" style="left:1816px;top:132px;width:19px;height:1.3px;background:#9cdcfe;opacity:0.55"></div>
<div class="a" style="left:1836px;top:132px;width:70px;height:1.3px;background:#9a9a9a;opacity:0.35"></div>
<div class="a" style="left:1793px;top:134px;width:2px;height:1.3px;background:#9cdcfe;opacity:0.55"></div>
<div class="a" style="left:1798px;top:134px;width:3px;height:1.3px;background:#4ec9b0;opacity:0.55"></div>
<div class="a" style="left:1802px;top:134px;width:4px;height:1.3px;background:#dcdcaa;opacity:0.55"></div>
<div class="a" style="left:1807px;top:134px;width:8px;height:1.3px;background:#9cdcfe;opacity:0.55"></div>
<div class="a" style="left:1816px;top:134px;width:89px;height:1.3px;background:#9a9a9a;opacity:0.35"></div>
<div class="a" style="left:1793px;top:138px;width:1px;height:1.3px;background:#6a9955;opacity:0.55"></div>
<div class="a" style="left:1795px;top:138px;width:34px;height:1.3px;background:#6a9955;opacity:0.55"></div>
<div class="a" style="left:1793px;top:142px;width:5px;height:1.3px;background:#dcdcaa;opacity:0.55"></div>
<div class="a" style="left:1799px;top:142px;width:1px;height:1.3px;background:#569cd6;opacity:0.55"></div>
<div class="a" style="left:1800px;top:142px;width:18px;height:1.3px;background:#ce9178;opacity:0.55"></div>
<div class="a" style="left:1819px;top:142px;width:10px;height:1.3px;background:#9cdcfe;opacity:0.55"></div>
<div class="a" style="left:1830px;top:142px;width:13px;height:1.3px;background:#ce9178;opacity:0.55"></div>
<div class="a" style="left:1793px;top:144px;width:5px;height:1.3px;background:#dcdcaa;opacity:0.55"></div>
<div class="a" style="left:1799px;top:144px;width:1px;height:1.3px;background:#569cd6;opacity:0.55"></div>
<div class="a" style="left:1800px;top:144px;width:18px;height:1.3px;background:#ce9178;opacity:0.55"></div>
<div class="a" style="left:1819px;top:144px;width:10px;height:1.3px;background:#9cdcfe;opacity:0.55"></div>
<div class="a" style="left:1830px;top:144px;width:17px;height:1.3px;background:#ce9178;opacity:0.55"></div>
<div class="a" style="left:1793px;top:146px;width:5px;height:1.3px;background:#dcdcaa;opacity:0.55"></div>
<div class="a" style="left:1799px;top:146px;width:1px;height:1.3px;background:#569cd6;opacity:0.55"></div>
<div class="a" style="left:1800px;top:146px;width:18px;height:1.3px;background:#ce9178;opacity:0.55"></div>
<div class="a" style="left:1819px;top:146px;width:10px;height:1.3px;background:#9cdcfe;opacity:0.55"></div>
<div class="a" style="left:1830px;top:146px;width:15px;height:1.3px;background:#ce9178;opacity:0.55"></div>
<div class="a" style="left:1793px;top:152px;width:1px;height:1.3px;background:#6a9955;opacity:0.55"></div>
<div class="a" style="left:1795px;top:152px;width:20px;height:1.3px;background:#6a9955;opacity:0.55"></div>
<div class="a" style="left:1793px;top:154px;width:14px;height:1.3px;background:#9cdcfe;opacity:0.55"></div>
<div class="a" style="left:1810px;top:154px;width:9px;height:1.3px;background:#4ec9b0;opacity:0.55"></div>
<div class="a" style="left:1820px;top:154px;width:14px;height:1.3px;background:#dcdcaa;opacity:0.55"></div>
<div class="a" style="left:1835px;top:154px;width:10px;height:1.3px;background:#ce9178;opacity:0.55"></div>
<div class="a" style="left:1793px;top:158px;width:5px;height:1.3px;background:#dcdcaa;opacity:0.55"></div>
<div class="a" style="left:1799px;top:158px;width:13px;height:1.3px;background:#9cdcfe;opacity:0.55"></div>
<div class="a" style="left:1793px;top:162px;width:1px;height:1.3px;background:#6a9955;opacity:0.55"></div>
<div class="a" style="left:1795px;top:162px;width:20px;height:1.3px;background:#6a9955;opacity:0.55"></div>
<div class="a" style="left:1793px;top:164px;width:1px;height:1.3px;background:#6a9955;opacity:0.55"></div>
<div class="a" style="left:1795px;top:164px;width:20px;height:1.3px;background:#6a9955;opacity:0.55"></div>
<div class="a" style="left:1816px;top:164px;width:6px;height:1.3px;background:#ce9178;opacity:0.55"></div>
<div class="a" style="left:1793px;top:166px;width:1px;height:1.3px;background:#6a9955;opacity:0.55"></div>
<div class="a" style="left:1795px;top:166px;width:20px;height:1.3px;background:#6a9955;opacity:0.55"></div>
<div class="a" style="left:1793px;top:170px;width:10px;height:1.3px;background:#9cdcfe;opacity:0.55"></div>
<div class="a" style="left:1806px;top:170px;width:10px;height:1.3px;background:#ce9178;opacity:0.55"></div>
<div class="a" style="left:1793px;top:172px;width:8px;height:1.3px;background:#9cdcfe;opacity:0.55"></div>
<div class="a" style="left:1804px;top:172px;width:15px;height:1.3px;background:#ce9178;opacity:0.55"></div>
<div class="a" style="left:1793px;top:174px;width:8px;height:1.3px;background:#9cdcfe;opacity:0.55"></div>
<div class="a" style="left:1804px;top:174px;width:12px;height:1.3px;background:#ce9178;opacity:0.55"></div>
<div class="a" style="left:1793px;top:176px;width:10px;height:1.3px;background:#9cdcfe;opacity:0.55"></div>
<div class="a" style="left:1806px;top:176px;width:2px;height:1.3px;background:#4ec9b0;opacity:0.55"></div>
<div class="a" style="left:1809px;top:176px;width:12px;height:1.3px;background:#dcdcaa;opacity:0.55"></div>
<div class="a" style="left:1822px;top:176px;width:20px;height:1.3px;background:#ce9178;opacity:0.55"></div>
<div class="a" style="left:1843px;top:176px;width:25px;height:1.3px;background:#9cdcfe;opacity:0.55"></div>
<div class="a" style="left:1793px;top:180px;width:2px;height:1.3px;background:#4ec9b0;opacity:0.55"></div>
<div class="a" style="left:1796px;top:180px;width:10px;height:1.3px;background:#dcdcaa;opacity:0.55"></div>
<div class="a" style="left:1807px;top:180px;width:24px;height:1.3px;background:#9cdcfe;opacity:0.55"></div>
<div class="a" style="left:1793px;top:184px;width:1px;height:1.3px;background:#6a9955;opacity:0.55"></div>
<div class="a" style="left:1795px;top:184px;width:50px;height:1.3px;background:#6a9955;opacity:0.55"></div>
<div class="a" style="left:1793px;top:188px;width:1px;height:1.3px;background:#6a9955;opacity:0.55"></div>
<div class="a" style="left:1795px;top:188px;width:28px;height:1.3px;background:#6a9955;opacity:0.55"></div>
<div class="a" style="left:1793px;top:190px;width:1px;height:1.3px;background:#6a9955;opacity:0.55"></div>
<div class="a" style="left:1795px;top:190px;width:27px;height:1.3px;background:#6a9955;opacity:0.55"></div>
<div class="a" style="left:1793px;top:192px;width:8px;height:1.3px;background:#9cdcfe;opacity:0.55"></div>
<div class="a" style="left:1804px;top:192px;width:18px;height:1.3px;background:#dcdcaa;opacity:0.55"></div>
<div class="a" style="left:1797px;top:194px;width:24px;height:1.3px;background:#ce9178;opacity:0.55"></div>
<div class="a" style="left:1793px;top:196px;width:9px;height:1.3px;background:#9cdcfe;opacity:0.55"></div>
<div class="a" style="left:1805px;top:196px;width:7px;height:1.3px;background:#dcdcaa;opacity:0.55"></div>
<div class="a" style="left:1813px;top:196px;width:24px;height:1.3px;background:#ce9178;opacity:0.55"></div>
<div class="a" style="left:1793px;top:200px;width:3px;height:1.3px;background:#c586c0;opacity:0.55"></div>
<div class="a" style="left:1797px;top:200px;width:4px;height:1.3px;background:#9cdcfe;opacity:0.55"></div>
<div class="a" style="left:1802px;top:200px;width:2px;height:1.3px;background:#c586c0;opacity:0.55"></div>
<div class="a" style="left:1805px;top:200px;width:10px;height:1.3px;background:#9cdcfe;opacity:0.55"></div>
<div class="a" style="left:1797px;top:202px;width:7px;height:1.3px;background:#dcdcaa;opacity:0.55"></div>
<div class="a" style="left:1805px;top:202px;width:20px;height:1.3px;background:#ce9178;opacity:0.55"></div>
<div class="a" style="left:1797px;top:206px;width:8px;height:1.3px;background:#9cdcfe;opacity:0.55"></div>
<div class="a" style="left:1808px;top:206px;width:12px;height:1.3px;background:#dcdcaa;opacity:0.55"></div>
<div class="a" style="left:1821px;top:206px;width:35px;height:1.3px;background:#ce9178;opacity:0.55"></div>
<div class="a" style="left:1797px;top:208px;width:2px;height:1.3px;background:#c586c0;opacity:0.55"></div>
<div class="a" style="left:1800px;top:208px;width:12px;height:1.3px;background:#9cdcfe;opacity:0.55"></div>
<div class="a" style="left:1813px;top:208px;width:3px;height:1.3px;background:#d4d4d4;opacity:0.55"></div>
<div class="a" style="left:1801px;top:210px;width:7px;height:1.3px;background:#dcdcaa;opacity:0.55"></div>
<div class="a" style="left:1809px;top:210px;width:10px;height:1.3px;background:#ce9178;opacity:0.55"></div>
<div class="a" style="left:1820px;top:210px;width:14px;height:1.3px;background:#9cdcfe;opacity:0.55"></div>
<div class="a" style="left:1835px;top:210px;width:13px;height:1.3px;background:#ce9178;opacity:0.55"></div>
<div class="a" style="left:1797px;top:214px;width:4px;height:1.3px;background:#c586c0;opacity:0.55"></div>
<div class="a" style="left:1801px;top:216px;width:7px;height:1.3px;background:#dcdcaa;opacity:0.55"></div>
<div class="a" style="left:1809px;top:216px;width:30px;height:1.3px;background:#ce9178;opacity:0.55"></div>
<div class="a" style="left:1801px;top:218px;width:8px;height:1.3px;background:#c586c0;opacity:0.55"></div>
<div class="a" style="left:1797px;top:222px;width:12px;height:1.3px;background:#9cdcfe;opacity:0.55"></div>
<div class="a" style="left:1812px;top:222px;width:16px;height:1.3px;background:#ce9178;opacity:0.55"></div>
<div class="a" style="left:1797px;top:224px;width:12px;height:1.3px;background:#9cdcfe;opacity:0.55"></div>
<div class="a" style="left:1812px;top:224px;width:4px;height:1.3px;background:#4ec9b0;opacity:0.55"></div>
<div class="a" style="left:1817px;top:224px;width:10px;height:1.3px;background:#dcdcaa;opacity:0.55"></div>
<div class="a" style="left:1828px;top:224px;width:22px;height:1.3px;background:#9cdcfe;opacity:0.55"></div>
<div class="a" style="left:1797px;top:226px;width:15px;height:1.3px;background:#9cdcfe;opacity:0.55"></div>
<div class="a" style="left:1813px;top:226px;width:15px;height:1.3px;background:#9cdcfe;opacity:0.55"></div>
<div class="a" style="left:1829px;top:226px;width:22px;height:1.3px;background:#9cdcfe;opacity:0.55"></div>
<div class="a" style="left:1793px;top:230px;width:2px;height:1.3px;background:#9cdcfe;opacity:0.55"></div>
<div class="a" style="left:1796px;top:230px;width:7px;height:1.3px;background:#dcdcaa;opacity:0.55"></div>
<div class="a" style="left:1775px;top:112px;width:10px;height:502px;background:linear-gradient(to right,rgba(0,0,0,0),rgba(0,0,0,.28))"></div>
<div class="a" style="left:1905px;top:112px;width:15px;height:502px;background:#1f1f1f;"></div>
<div class="a" style="left:1905px;top:112px;width:1px;height:502px;background:#121212;"></div>
<div class="a" style="left:1905px;top:112px;width:15px;height:1px;background:#121212;"></div>
<div class="a" style="left:1915px;top:137px;width:5px;height:6px;background:#d4aa00;"></div>
<div class="a" style="left:1906px;top:204px;width:14px;height:2px;background:#a8a8a8;"></div>
<div class="a" style="left:1906px;top:206px;width:14px;height:6px;background:#5a5a22;"></div>
<div class="a" style="left:1904px;top:212px;width:1px;height:25px;background:#4a3a26;"></div>
<div class="a" style="left:1904px;top:389px;width:1px;height:21px;background:#5f5230;"></div>
<div class="a" style="left:1904px;top:487px;width:1px;height:25px;background:#5a5722;"></div>
<div class="t" id="t28" style="left:391px;top:619.50px;height:24px;line-height:24px;font-size:11.5px;color:#9d9d9d;font-family:'Liberation Sans';transform-origin:0 50%;transform:scaleX(0.9167);">問題</div>
<div class="a" style="left:418px;top:624px;width:16px;height:16px;border-radius:50%;background:#0078d4"></div>
<div class="t" id="t29" style="left:422.3px;top:620.00px;height:24px;line-height:24px;font-size:10px;color:#ffffff;font-family:'Liberation Sans';font-weight:bold;transform-origin:0 50%;transform:scaleX(1.0787);">1</div>
<div class="t" id="t30" style="left:458px;top:619.50px;height:24px;line-height:24px;font-size:11.5px;color:#9d9d9d;font-family:'Liberation Sans';transform-origin:0 50%;transform:scaleX(0.8750);">出力</div>
<div class="t" id="t31" style="left:505px;top:619.50px;height:24px;line-height:24px;font-size:11.5px;color:#9d9d9d;font-family:'Liberation Sans';transform-origin:0 50%;transform:scaleX(0.7188);">デバッグ</div>
<div class="t" id="t32" style="left:543px;top:619.50px;height:24px;line-height:24px;font-size:11.5px;color:#9d9d9d;font-family:'Liberation Sans';transform-origin:0 50%;transform:scaleX(0.6750);">コンソール</div>
<div class="t" id="t33" style="left:609px;top:619.50px;height:24px;line-height:24px;font-size:11.5px;color:#e7e7e7;font-family:'Liberation Sans';transform-origin:0 50%;transform:scaleX(0.6833);">ターミナル</div>
<div class="a" style="left:608px;top:642px;width:45px;height:2px;background:#0078d4;"></div>
<div class="t" id="t34" style="left:676px;top:619.50px;height:24px;line-height:24px;font-size:11.5px;color:#9d9d9d;font-family:'Liberation Sans';transform-origin:0 50%;transform:scaleX(0.6944);">ポート</div>
<svg class="i" style="left:1600px;top:623px" width="17" height="17" viewBox="0 0 17 17"><ellipse cx="8.5" cy="9.8" rx="5" ry="5.6" stroke="#cccccc" stroke-width="1.3" fill="none"/><path d="M5.8 4.6a2.7 2.7 0 0 1 5.4 0M0 7.5h3.5M13.5 7.5H17M0 13h3.5M13.5 13H17M2 2l2 2M15 2l-2 2M2 16.5l2-1.5M15 16.5l-2-1.5M6.5 7.8l4 4M10.5 7.8l-4 4" stroke="#cccccc" stroke-width="1.2" fill="none"/></svg>
<div class="t" id="t35" style="left:1621px;top:620.00px;height:24px;line-height:24px;font-size:12.5px;color:#cccccc;font-family:'Liberation Sans';transform-origin:0 50%;transform:scaleX(0.9101);">Python Debug Console</div>
<svg class="i" style="left:1746px;top:624px" width="15" height="15" viewBox="0 0 15 15"><path d="M7.5 0v15M0 7.5h15" stroke="#cccccc" stroke-width="1.5"/></svg>
<svg class="i" style="left:1765px;top:629px" width="9" height="5" viewBox="0 0 9 5"><path d="M.5.5 4.5 4.5 8.5.5" stroke="#cccccc" stroke-width="1.2" fill="none"/></svg>
<svg class="i" style="left:1786px;top:624px" width="14" height="14" viewBox="0 0 14 14"><rect x=".75" y=".75" width="12.5" height="12.5" rx="1.5" stroke="#cccccc" stroke-width="1.4" fill="none"/><path d="M7 1v12" stroke="#cccccc" stroke-width="1.4"/></svg>
<svg class="i" style="left:1811px;top:624px" width="13" height="15" viewBox="0 0 13 15"><path d="M0 3h13M4.5 3V1h4v2M2 3.5l.8 10.7h7.4L11 3.5M5 5.5v6.5M8 5.5v6.5" stroke="#cccccc" stroke-width="1.3" fill="none"/></svg>
<div class="a" style="left:1836.9px;top:630px;width:2.3px;height:2.3px;border-radius:50%;background:#cccccc"></div>
<div class="a" style="left:1842.4px;top:630px;width:2.3px;height:2.3px;border-radius:50%;background:#cccccc"></div>
<div class="a" style="left:1847.9px;top:630px;width:2.3px;height:2.3px;border-radius:50%;background:#cccccc"></div>
<svg class="i" style="left:1862px;top:624px" width="15" height="15" viewBox="0 0 15 15"><path d="M1 5V1h4M10 1h4v4M14 10v4h-4M5 14H1v-4" stroke="#cccccc" stroke-width="1.4" fill="none"/></svg>
<svg class="i" style="left:1890px;top:625px" width="12" height="12" viewBox="0 0 12 12"><path d="M1 1l10 10M11 1 1 11" stroke="#cccccc" stroke-width="1.4"/></svg>
<div class="term" style="top:656px">Number of Files: 14</div>
<div class="term" style="top:674px">Number of Functions: 86</div>
<div class="term" style="top:692px">20250711114851</div>
<div class="term" style="top:710px">  No Call By references found.</div>
<div class="term" style="top:728px">  pfile</div>
<div class="term" style="top:746px">  Call By: 1 references</div>
<div class="term" style="top:764px">  egsecute</div>
<div class="term" style="top:782px">  Call By: 2 references</div>
<div class="term" style="top:800px">  chimaera</div>
<div class="term" style="top:818px">  Call By: 1 references</div>
<div class="term" style="top:836px">  linesave</div>
<div class="term" style="top:854px">  Call By: 1 references</div>
<div class="a" style="left:1905px;top:655px;width:15px;height:215px;background:#181818;"></div>
<div class="a" style="left:1905px;top:655px;width:1px;height:215px;background:#0a0a0a;"></div>
<div class="a" style="left:1905px;top:655px;width:15px;height:1px;background:#0a0a0a;"></div>
<div class="a" style="left:1906px;top:748px;width:14px;height:122px;background:#474747;"></div>
</body></html>
